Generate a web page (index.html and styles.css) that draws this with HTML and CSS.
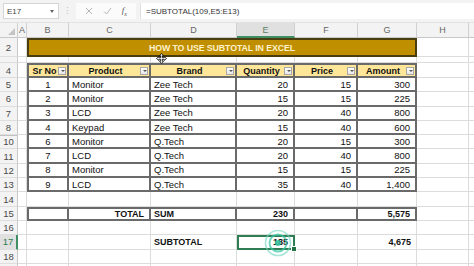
FILE: index.html
```html
<!DOCTYPE html>
<html>
<head>
<meta charset="utf-8">
<link rel="stylesheet" href="styles.css">
</head>
<body>
<div class="fbar">
  <div class="namebox"><span class="nbtext">E17</span><span class="nbdd"></span></div>
  <div class="sep">⋮</div>
  <div class="fbtns">
    <svg class="ic" width="8" height="8" viewBox="0 0 8 8"><path d="M1 1L7 7M7 1L1 7" stroke="#b5b5b5" stroke-width="1"/></svg>
    <svg class="ic" width="9" height="8" viewBox="0 0 9 8"><path d="M1 4.5L3.5 7L8 1" stroke="#b5b5b5" stroke-width="1" fill="none"/></svg>
    <span class="fx">f<sub>x</sub></span>
  </div>
  <div class="formula">=SUBTOTAL(109,E5:E13)</div>
</div>

<div class="sheet">
  <div class="r hdr">
    <div class="c corner"><span class="tri"></span></div>
    <div class="c ch">A</div>
    <div class="c ch">B</div>
    <div class="c ch">C</div>
    <div class="c ch">D</div>
    <div class="c ch act">E</div>
    <div class="c ch">F</div>
    <div class="c ch">G</div>
    <div class="c ch">H</div>
    <div class="c ch"></div>
  </div>

  <div class="r r2">
    <div class="c rh">2</div>
    <div class="c"></div>
    <div class="c title">HOW TO USE SUBTOTAL IN EXCEL</div>
    <div class="c"></div>
    <div class="c"></div>
  </div>

  <div class="r r3">
    <div class="c rh"></div>
    <div class="c"></div><div class="c"></div><div class="c"></div><div class="c"></div><div class="c"></div><div class="c"></div><div class="c"></div><div class="c"></div><div class="c"></div>
  </div>

  <div class="r r4">
    <div class="c rh">4</div>
    <div class="c"></div>
    <div class="c t th l"><span class="lbl">Sr No</span><span class="dd"></span></div>
    <div class="c t th"><span class="lbl">Product</span><span class="dd"></span></div>
    <div class="c t th"><span class="lbl">Brand</span><span class="dd"></span></div>
    <div class="c t th"><span class="lbl">Quantity</span><span class="dd"></span></div>
    <div class="c t th"><span class="lbl">Price</span><span class="dd"></span></div>
    <div class="c t th"><span class="lbl">Amount</span><span class="dd"></span></div>
    <div class="c"></div>
    <div class="c"></div>
  </div>

  <div class="r rd">
    <div class="c rh">5</div><div class="c"></div>
    <div class="c t l ctr">1</div><div class="c t">Monitor</div><div class="c t">Zee Tech</div>
    <div class="c t num">20</div><div class="c t num">15</div><div class="c t num">300</div>
    <div class="c"></div><div class="c"></div>
  </div>
  <div class="r rd">
    <div class="c rh">6</div><div class="c"></div>
    <div class="c t l ctr">2</div><div class="c t">Monitor</div><div class="c t">Zee Tech</div>
    <div class="c t num">15</div><div class="c t num">15</div><div class="c t num">225</div>
    <div class="c"></div><div class="c"></div>
  </div>
  <div class="r rd">
    <div class="c rh">7</div><div class="c"></div>
    <div class="c t l ctr">3</div><div class="c t">LCD</div><div class="c t">Zee Tech</div>
    <div class="c t num">20</div><div class="c t num">40</div><div class="c t num">800</div>
    <div class="c"></div><div class="c"></div>
  </div>
  <div class="r rd">
    <div class="c rh">8</div><div class="c"></div>
    <div class="c t l ctr">4</div><div class="c t">Keypad</div><div class="c t">Zee Tech</div>
    <div class="c t num">15</div><div class="c t num">40</div><div class="c t num">600</div>
    <div class="c"></div><div class="c"></div>
  </div>
  <div class="r rd">
    <div class="c rh hid">10</div><div class="c"></div>
    <div class="c t l ctr">6</div><div class="c t">Monitor</div><div class="c t">Q.Tech</div>
    <div class="c t num">20</div><div class="c t num">15</div><div class="c t num">300</div>
    <div class="c"></div><div class="c"></div>
  </div>
  <div class="r rd">
    <div class="c rh">11</div><div class="c"></div>
    <div class="c t l ctr">7</div><div class="c t">LCD</div><div class="c t">Q.Tech</div>
    <div class="c t num">20</div><div class="c t num">40</div><div class="c t num">800</div>
    <div class="c"></div><div class="c"></div>
  </div>
  <div class="r rd">
    <div class="c rh">12</div><div class="c"></div>
    <div class="c t l ctr">8</div><div class="c t">Monitor</div><div class="c t">Q.Tech</div>
    <div class="c t num">15</div><div class="c t num">15</div><div class="c t num">225</div>
    <div class="c"></div><div class="c"></div>
  </div>
  <div class="r rd">
    <div class="c rh">13</div><div class="c"></div>
    <div class="c t l ctr">9</div><div class="c t">LCD</div><div class="c t">Q.Tech</div>
    <div class="c t num">35</div><div class="c t num">40</div><div class="c t num">1,400</div>
    <div class="c"></div><div class="c"></div>
  </div>
  <div class="r rd">
    <div class="c rh">14</div>
    <div class="c"></div><div class="c"></div><div class="c"></div><div class="c"></div><div class="c"></div><div class="c"></div><div class="c"></div><div class="c"></div><div class="c"></div>
  </div>
  <div class="r rd">
    <div class="c rh">15</div><div class="c"></div>
    <div class="c t tt l"></div>
    <div class="c t tt num b">TOTAL</div>
    <div class="c t tt b">SUM</div>
    <div class="c t tt num b">230</div>
    <div class="c t tt"></div>
    <div class="c t tt num b">5,575</div>
    <div class="c"></div><div class="c"></div>
  </div>
  <div class="r rd">
    <div class="c rh">16</div>
    <div class="c"></div><div class="c"></div><div class="c"></div><div class="c"></div><div class="c"></div><div class="c"></div><div class="c"></div><div class="c"></div><div class="c"></div>
  </div>
  <div class="r rd">
    <div class="c rh ract">17</div><div class="c"></div>
    <div class="c"></div>
    <div class="c"></div>
    <div class="c b">SUBTOTAL</div>
    <div class="c num b active">185<span class="handle"></span></div>
    <div class="c"></div>
    <div class="c num b">4,675</div>
    <div class="c"></div><div class="c"></div>
  </div>
  <div class="r rd">
    <div class="c rh">18</div>
    <div class="c"></div><div class="c"></div><div class="c"></div><div class="c"></div><div class="c"></div><div class="c"></div><div class="c"></div><div class="c"></div><div class="c"></div>
  </div>
  <div class="r rd">
    <div class="c rh"></div>
    <div class="c"></div><div class="c"></div><div class="c"></div><div class="c"></div><div class="c"></div><div class="c"></div><div class="c"></div><div class="c"></div><div class="c"></div>
  </div>

  <svg class="movecur" width="11" height="11" viewBox="0 0 11 11">
    <path d="M5.5 0.5L7.5 2.8H6.3V4.7H8.2V3.5L10.5 5.5L8.2 7.5V6.3H6.3V8.2H7.5L5.5 10.5L3.5 8.2H4.7V6.3H2.8V7.5L0.5 5.5L2.8 3.5V4.7H4.7V2.8H3.5Z" fill="#fff" stroke="#000" stroke-width="0.8" stroke-linejoin="round"/>
  </svg>

  <svg class="click" width="28" height="28" viewBox="0 0 28 28">
    <circle cx="14" cy="14" r="12.5" fill="none" stroke="#6fd6c0" stroke-width="1.6" opacity="0.6"/>
    <circle cx="14" cy="14" r="8.5" fill="none" stroke="#3cc7a6" stroke-width="1.8" opacity="0.75"/>
    <circle cx="14" cy="14" r="3" fill="#35c29f" opacity="0.9"/>
  </svg>
</div>
</body>
</html>
```

FILE: styles.css
```css
html, body {
  margin: 0;
  padding: 0;
  background: #ffffff;
}
body {
  width: 474px;
  height: 266px;
  overflow: hidden;
  font-family: "Liberation Sans", Arial, sans-serif;
}

/* ---------- formula bar ---------- */
.fbar {
  height: 23px;
  display: flex;
  align-items: center;
  padding-left: 3px;
  background: #f3f3f3;
  box-sizing: border-box;
  border-bottom: 1px solid #e2e2e2;
}
.namebox {
  width: 56px;
  height: 16px;
  box-sizing: border-box;
  background: #fff;
  border: 1px solid #d6d6d6;
  display: flex;
  align-items: center;
  justify-content: space-between;
  padding: 0 4px 0 3px;
  font-size: 8px;
  color: #444;
}
.nbdd {
  width: 0;
  height: 0;
  border-left: 2.5px solid transparent;
  border-right: 2.5px solid transparent;
  border-top: 3px solid #666;
}
.sep {
  width: 17px;
  text-align: center;
  color: #bdbdbd;
  font-size: 9px;
}
.fbtns {
  width: 60px;
  height: 16px;
  background: #fbfbfb;
  display: flex;
  align-items: center;
  justify-content: space-around;
  padding: 0 4px;
  box-sizing: border-box;
}
.fx {
  font-family: "Liberation Serif", serif;
  font-style: italic;
  font-size: 9px;
  color: #555;
}
.fx sub {
  font-size: 6px;
}
.formula {
  flex: 1;
  height: 16px;
  margin-left: 4px;
  background: #fff;
  border-left: 1px solid #e0e0e0;
  display: flex;
  align-items: center;
  padding-left: 5px;
  font-size: 8px;
  color: #333;
}

/* ---------- sheet grid ---------- */
.sheet {
  position: relative;
  width: 474px;
  overflow: hidden;
}
.r {
  display: grid;
  grid-template-columns: 18px 9px 42px 82px 86px 58px 63px 59px 52px 60px;
}
.hdr { height: 15px; }
.r2 { height: 19px; grid-template-columns: 18px 9px 390px 52px 60px; }
.r3 { height: 6px; }
.r4 { height: 15px; }
.rd { height: 14.3px; }

.c {
  box-sizing: border-box;
  border-right: 1px solid #dcdcdc;
  border-bottom: 1px solid #dcdcdc;
  overflow: hidden;
  white-space: nowrap;
  display: flex;
  align-items: center;
  padding: 0 3px;
  font-size: 9.5px;
  color: #111;
  min-width: 0;
}

/* column headers */
.ch {
  justify-content: center;
  background: #f3f3f3;
  color: #666;
  border-right: 1px solid #d0d0d0;
  border-bottom: 1px solid #c8c8c8;
  font-size: 9px;
  padding: 0;
}
.ch.act {
  background: #e0e0e0;
  color: #5d7f68;
  border-bottom: 2px solid #3f8f63;
}
.corner {
  background: #f3f3f3;
  border-right: 1px solid #d0d0d0;
  border-bottom: 1px solid #c8c8c8;
  position: relative;
  padding: 0;
}
.tri {
  position: absolute;
  right: 2px;
  bottom: 2px;
  width: 0;
  height: 0;
  border-left: 7px solid transparent;
  border-bottom: 7px solid #c4c4c4;
}

/* row headers */
.rh {
  justify-content: center;
  background: #f3f3f3;
  color: #4a4a4a;
  border-right: 1px solid #c9c9c9;
  border-bottom: 1px solid #dedede;
  font-size: 9.5px;
  padding: 0;
}
.rh.hid {
  box-shadow: inset 0 1px 0 #c2c2c2;
}
.rh.ract {
  background: #e0e0e0;
  color: #2e7d4f;
  border-right: 2px solid #3f8f63;
}

/* title */
.title {
  background: #bf8f00;
  border: 2px solid #4a3d10;
  justify-content: center;
  color: #fff2cc;
  font-weight: bold;
  font-size: 8.8px;
  letter-spacing: -0.1px;
}

/* table */
.t {
  border-right: 2px solid #6a6a6a;
  border-bottom: 2px solid #6a6a6a;
}
.t.l { border-left: 2px solid #6a6a6a; }
.t.tt { border-top: 2px solid #6a6a6a; }
.th {
  border-top: 2px solid #6a6a6a;
  background: #ffe699;
  font-weight: bold;
  font-size: 9px;
  padding: 0 1px 0 2px;
}
.lbl {
  flex: 1;
  text-align: center;
}
.dd {
  width: 8px;
  height: 8px;
  box-sizing: border-box;
  border: 1px solid #a8a8a8;
  background: linear-gradient(#ffffff, #e6e6e6);
  position: relative;
  flex: none;
}
.dd::after {
  content: "";
  position: absolute;
  left: 1.5px;
  top: 2.5px;
  border-left: 2px solid transparent;
  border-right: 2px solid transparent;
  border-top: 2px solid #555;
}
.ctr { justify-content: center; }
.num { justify-content: flex-end; padding-right: 5px; }
.b { font-weight: bold; font-size: 9px; }

/* active cell */
.active {
  border: 2px solid #2f7d52;
  position: relative;
  overflow: visible;
}
.handle {
  position: absolute;
  right: -4px;
  bottom: -4px;
  width: 4px;
  height: 4px;
  background: #217346;
  border: 1px solid #fff;
}

/* overlays */
.movecur {
  position: absolute;
  left: 156px;
  top: 30px;
}
.click {
  position: absolute;
  left: 264px;
  top: 206px;
}
```
